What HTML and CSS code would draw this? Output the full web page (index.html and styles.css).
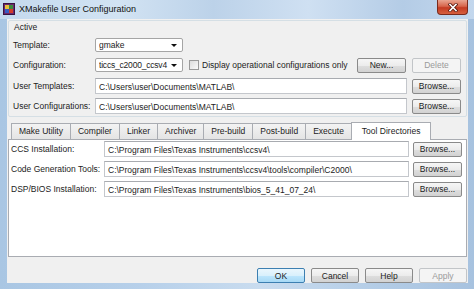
FILE: index.html
```html
<!DOCTYPE html>
<html>
<head>
  <title>XMakefile User Configuration</title>
  <meta charset="UTF-8" />
  <link rel="stylesheet" href="styles.css">
</head>
<body>
  <div class="window">
    <div class="titlebar">
      <svg class="app-icon" width="12" height="12" viewBox="0 0 12 12">
        <rect x="0.5" y="0.5" width="11" height="11" fill="#6b2a6e" stroke="#3a1240"/>
        <rect x="2" y="2" width="4" height="4" fill="#e8c23a"/>
        <rect x="6" y="6" width="4" height="4" fill="#d43a2a"/>
        <rect x="6" y="2" width="4" height="4" fill="#3c8a3c"/>
        <rect x="2" y="6" width="4" height="4" fill="#3a5cc4"/>
      </svg>
      <span class="title">XMakefile User Configuration</span>
      <div class="close">
        <svg width="10" height="9" viewBox="0 0 10 9">
          <path d="M2 1.5 L8 7.5 M8 1.5 L2 7.5" stroke="#5a1a10" stroke-width="3.2" stroke-linecap="square"/>
          <path d="M2 1.5 L8 7.5 M8 1.5 L2 7.5" stroke="#fff" stroke-width="1.6" stroke-linecap="square"/>
        </svg>
      </div>
    </div>

    <div class="client">
      <div class="group">
        <div class="group-title">Active</div>
        <div class="row row-template">
          <span class="lbl">Template:</span>
          <div class="combo"><span class="combo-text">gmake</span><span class="arrow"></span></div>
        </div>
        <div class="row row-config">
          <span class="lbl">Configuration:</span>
          <div class="combo"><span class="combo-text narrow">ticcs_c2000_ccsv4</span><span class="arrow"></span></div>
          <span class="check"></span>
          <span class="check-text">Display operational configurations only</span>
          <button class="btn btn-new">New...</button>
          <button class="btn disabled">Delete</button>
        </div>
        <div class="row row-path">
          <span class="lbl">User Templates:</span>
          <div class="field">C:\Users\user\Documents\MATLAB\</div>
          <button class="btn">Browse...</button>
        </div>
        <div class="row row-path2">
          <span class="lbl">User Configurations:</span>
          <div class="field">C:\Users\user\Documents\MATLAB\</div>
          <button class="btn">Browse...</button>
        </div>
      </div>

      <div class="tabs">
        <div class="tab">Make Utility</div>
        <div class="tab">Compiler</div>
        <div class="tab">Linker</div>
        <div class="tab">Archiver</div>
        <div class="tab">Pre-build</div>
        <div class="tab">Post-build</div>
        <div class="tab">Execute</div>
        <div class="tab selected">Tool Directories</div>
      </div>
      <div class="panel">
        <div class="prow">
          <span class="plbl">CCS Installation:</span>
          <div class="field">C:\Program Files\Texas Instruments\ccsv4\</div>
          <button class="btn">Browse...</button>
        </div>
        <div class="prow">
          <span class="plbl">Code Generation Tools:</span>
          <div class="field">C:\Program Files\Texas Instruments\ccsv4\tools\compiler\C2000\</div>
          <button class="btn">Browse...</button>
        </div>
        <div class="prow">
          <span class="plbl">DSP/BIOS Installation:</span>
          <div class="field">C:\Program Files\Texas Instruments\bios_5_41_07_24\</div>
          <button class="btn">Browse...</button>
        </div>
      </div>

      <div class="footer">
        <button class="btn fbtn default">OK</button>
        <button class="btn fbtn">Cancel</button>
        <button class="btn fbtn">Help</button>
        <button class="btn fbtn disabled">Apply</button>
      </div>
    </div>
  </div>
</body>
</html>
```

FILE: styles.css
```css
body {
  margin: 0;
  font-family: "Liberation Sans", Arial, sans-serif;
  font-size: 8.5px;
  color: #1c1c1c;
}
.window {
  width: 474px;
  height: 289px;
  background: linear-gradient(90deg, #a9c6e3 0%, #b7d0ea 30%, #c9dcef 55%, #b3cce6 80%, #a7c2df 100%);
  display: flex;
  flex-direction: column;
  overflow: hidden;
}
.titlebar {
  height: 19px;
  display: flex;
  align-items: flex-start;
  background: linear-gradient(90deg, #c4d9ee 0%, #d2e3f3 25%, #bcd2e9 45%, #cfe0f2 65%, #b4cce6 85%, #c3d7ed 100%);
}
.app-icon {
  margin: 3px 0 0 3px;
}
.title {
  margin: 4px 0 0 4px;
  font-size: 9px;
  color: #111;
}
.close {
  margin-left: auto;
  margin-right: 6px;
  width: 29px;
  height: 14px;
  border: 1px solid #7a2a1c;
  border-top: none;
  border-radius: 0 0 4px 4px;
  background: linear-gradient(#e9a591 0%, #d7654b 45%, #c43b22 55%, #d65f3e 100%);
  display: flex;
  align-items: center;
  justify-content: center;
}
.client {
  margin: 0 6px 0 7px;
  height: 264px;
  background: #f0f0f0;
  display: flex;
  flex-direction: column;
}
.group {
  margin: 1px 1px 0 1px;
  height: 95px;
  border: 1px solid #d5dfe5;
  border-radius: 2px;
  padding: 0 5px 0 4px;
}
.group-title {
  height: 11px;
  line-height: 11px;
  padding: 1px 0 0 1px;
}
.row {
  height: 18px;
  display: flex;
  align-items: center;
}
.row-template { margin-top: 3px; }
.row-config { margin-top: 2px; }
.row-path { margin-top: 3px; }
.row-path2 { margin-top: 2px; }
.lbl {
  width: 82px;
  flex: none;
}
.combo {
  width: 88px;
  height: 14px;
  background: #fff;
  border: 1px solid #a5a5a5;
  border-radius: 2px;
  display: flex;
  align-items: center;
  padding-left: 3px;
  box-sizing: border-box;
  flex: none;
}
.combo-text {
  flex: 1;
  white-space: nowrap;
  overflow: hidden;
}
.combo-text.narrow {
  letter-spacing: -0.2px;
}
.arrow {
  width: 0;
  height: 0;
  border-left: 3px solid transparent;
  border-right: 3px solid transparent;
  border-top: 3px solid #111;
  margin: 0 5px 0 3px;
  flex: none;
}
.check {
  width: 8px;
  height: 8px;
  margin-left: 6px;
  border: 1px solid #9a9a9a;
  background: linear-gradient(135deg, #dcdcdc, #fafafa);
  flex: none;
}
.check-text {
  margin-left: 3px;
  white-space: nowrap;
}
.btn {
  font-family: inherit;
  font-size: 8.5px;
  color: #1c1c1c;
  height: 15px;
  width: 49px;
  padding: 0;
  border: 1px solid #8a8a8a;
  border-radius: 2px;
  background: linear-gradient(#f6f6f6 0%, #ececec 50%, #dedede 51%, #d2d2d2 100%);
  flex: none;
}
.btn.disabled {
  color: #9a9a9a;
  border-color: #c2c5c8;
  background: #f4f4f4;
}
.btn-new {
  margin-left: auto;
  margin-right: 6px;
}
.field {
  height: 16px;
  line-height: 16px;
  background: #fff;
  border: 1px solid #c4c7cc;
  border-top-color: #a8abb0;
  box-sizing: border-box;
  padding-left: 3px;
  white-space: nowrap;
  overflow: hidden;
}
.row .field {
  width: 313px;
  margin-right: 5px;
}
.tabs {
  margin-top: 5px;
  height: 17px;
  display: flex;
  align-items: flex-end;
  padding-left: 4px;
}
.tab {
  height: 15px;
  line-height: 15px;
  padding: 0 7px;
  border: 1px solid #a9acb2;
  border-bottom: none;
  border-left: none;
  background: linear-gradient(#f3f3f3, #e4e4e4);
  white-space: nowrap;
}
.tab:first-child {
  border-left: 1px solid #a9acb2;
}
.tab.selected {
  height: 17px;
  line-height: 16px;
  background: #fff;
  border-left: 1px solid #a9acb2;
  margin-left: -1px;
  margin-bottom: -1px;
  padding: 0 10px;
  position: relative;
}
.panel {
  margin: 0 1px;
  height: 118px;
  background: #fff;
  border: 1px solid #a9acb2;
  box-sizing: border-box;
  padding: 0 4px 0 2px;
}
.prow {
  height: 16px;
  display: flex;
  align-items: center;
  margin-top: 4px;
}
.prow:first-child { margin-top: 1px; }
.plbl {
  width: 93px;
  flex: none;
}
.prow .field {
  width: 306px;
  margin-right: 4px;
}
.footer {
  margin-top: 11px;
  display: flex;
  justify-content: flex-end;
  gap: 6px;
  padding-right: 1px;
}
.fbtn {
  width: 48px;
  height: 15px;
}
.btn.default {
  border-color: #3c7fb1;
  background: linear-gradient(#eaf6fd 0%, #d9f0fc 50%, #bee6fd 51%, #a7d9f5 100%);
}
```
